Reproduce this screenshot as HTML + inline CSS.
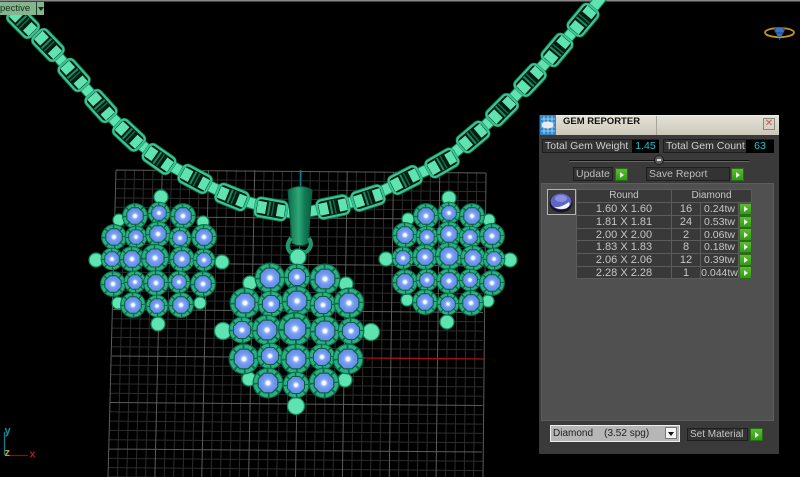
<!DOCTYPE html>
<html><head><meta charset="utf-8"><style>
html,body{margin:0;padding:0;background:#000}
#r{position:relative;width:800px;height:477px;overflow:hidden;background:#000;font:10.5px "Liberation Sans",sans-serif;color:#cfcfcf}
#r div{position:absolute;box-sizing:border-box;white-space:nowrap}
svg{position:absolute;left:0;top:0}
.box{background:#333;border:1px solid #1e1e1e;line-height:12px;padding-left:2px}
.val{background:#000;color:#19c8d2;text-align:center;line-height:13px}
.g{background:linear-gradient(#5cbb30,#329a16);border:1px solid #2a6a18}
.g:after{content:"";position:absolute;left:4px;top:2.5px;border-left:4px solid #e8f5e0;border-top:3px solid transparent;border-bottom:3px solid transparent}
.c{background:#393939;border:1px solid #5c5c5c;text-align:center;line-height:12px;color:#c6c6c6}
.n{font-size:11px}
</style></head><body><div id="r">
<svg width="800" height="477" viewBox="0 0 800 477">
<defs>
<radialGradient id="rg"><stop offset="0" stop-color="#fff"/><stop offset=".16" stop-color="#fbfdff"/><stop offset=".38" stop-color="#86a8f4"/><stop offset=".6" stop-color="#7098ee"/><stop offset="1" stop-color="#668ce6"/></radialGradient>
<linearGradient id="bail" x1="0" x2="1" y1="0" y2="0"><stop offset="0" stop-color="#0b6a48"/><stop offset=".45" stop-color="#2fa878"/><stop offset=".7" stop-color="#0f7a55"/><stop offset="1" stop-color="#0a5f40"/></linearGradient>
<g id="G"><circle r="15.800" fill="#0a6f4a"/><circle r="12.600" fill="none" stroke="#2bb082" stroke-width="3.800" stroke-dasharray="8 1.900"/><polygon points="-4.200,-10 4.200,-10 10,-4.200 10,4.200 4.200,10 -4.200,10 -10,4.200 -10,-4.200" fill="url(#rg)" stroke="#0b5f44" stroke-width="1.200"/></g>
<g id="L"><rect x="-17" y="-11" width="34" height="22" rx="6.500" fill="#0a7a50"/><rect x="-15.500" y="-9" width="31" height="18" rx="4.500" fill="#021c12" stroke="#3cc494" stroke-width="2.200"/><rect x="-14" y="-6" width="9" height="12" fill="#5fe3b0"/><rect x="6" y="-6" width="8" height="12" fill="#5fe3b0"/><rect x="-3" y="-7" width="2" height="14" fill="#1c8a62"/><rect x="1" y="-7" width="1.500" height="14" fill="#0f6a4a"/></g>
</defs>
<rect width="800" height="1.500" fill="#888"/>
<path stroke="#2d2d2d" stroke-width="1" fill="none" d="M125.25 170L117.4 477M134.5 170L126.75 477M143.75 170L136.1 477M153 170L145.5 477M171.5 170L164.25 477M180.75 170L173.6 477M190 170L183 477M199.25 170L192.4 477M217.75 170L211.1 477M227 170L220.5 477M236.25 170L229.9 477M245.5 170L239.25 477M264 171L258 477M273.25 171L267.4 477M282.5 171L276.75 477M291.75 171L286.1 477M310.25 171L304.9 477M319.5 171L314.25 477M328.75 171L323.6 477M338 171L333 477M356.5 171L351.75 477M365.75 172L361.1 477M375 172L370.5 477M384.25 172L379.9 477M402.75 172L398.6 477M412 172L408 477M421.25 172L417.4 477M430.5 172L426.75 477M449 172L445.5 477M458.25 172L454.9 477M467.5 172L464.25 477M476.75 172L473.6 477
M116 179.3l370 3M115.5 188.6l370 3M115.3 197.9l370 3M115 207.2l370 3M115 225.8l370 3M114.5 235.1l370 3M114.3 244.4l370 3M114 253.7l370 3M113.8 272.3l370 3M113.5 281.6l370 3M113.2 290.9l370 3M113 300.2l370 3M112.5 318.8l371 3M112.3 328.1l371 3M112 337.4l371 3M111.8 346.7l371 3M111.2 365.3l372 3M111 374.6l372 3M110.8 383.9l372 3M110.5 393.2l372 3M110 411.8l373 3M109.8 421.1l373 3M109.5 430.4l373 3M109.3 439.7l373 3M108.8 458.3l374 3M108.5 467.6l374 3M108.3 476.9l374 3"/>
<path stroke="#5c5c5c" stroke-width="1" fill="none" d="M116 170L108 477M162.25 170L154.9 477M208.5 170L201.75 477M254.75 170L248.6 477M301 171L295.5 477M347.25 171L342.4 477M393.5 172L389.25 477M439.75 172L436.1 477M486 173L483 477
M116 170l370 3M115 216.5l370 3M114 263l370 3M113 309.5l370 3M112 356l371 3M110.5 402.5l372 3M109 449l373 3"/>
<path d="M365 358L484 359" stroke="#a80f0f" stroke-width="1.200"/>
<path d="M300.500 170V190" stroke="#0c7f92" stroke-width="1.500"/>
<g fill="none" stroke-linejoin="round">
<path d="M8 6L23 22L48 45L74 75L101 106L129 135L159 159L195 179L232 197L271 209L292 213" stroke="#0b7a52" stroke-width="12"/>
<path d="M8 6L23 22L48 45L74 75L101 106L129 135L159 159L195 179L232 197L271 209L292 213" stroke="#5fe3b0" stroke-width="10"/>
<path d="M306 212L333 207L368 198L405 180L442 163L473 137L502 110L530 80L557 50L583 20L604 -6" stroke="#0b7a52" stroke-width="12"/>
<path d="M306 212L333 207L368 198L405 180L442 163L473 137L502 110L530 80L557 50L583 20L604 -6" stroke="#5fe3b0" stroke-width="10"/>
</g>
<use href="#L" transform="translate(23 22) rotate(45)"/>
<use href="#L" transform="translate(48 45) rotate(46)"/>
<use href="#L" transform="translate(74 75) rotate(48)"/>
<use href="#L" transform="translate(101 106) rotate(48)"/>
<use href="#L" transform="translate(129 135) rotate(43)"/>
<use href="#L" transform="translate(159 159) rotate(35)"/>
<use href="#L" transform="translate(195 179) rotate(28)"/>
<use href="#L" transform="translate(232 197) rotate(22)"/>
<use href="#L" transform="translate(271 209) rotate(10)"/>
<use href="#L" transform="translate(333 207) rotate(-12)"/>
<use href="#L" transform="translate(368 198) rotate(-18)"/>
<use href="#L" transform="translate(405 180) rotate(-27)"/>
<use href="#L" transform="translate(442 163) rotate(-30)"/>
<use href="#L" transform="translate(473 137) rotate(-40)"/>
<use href="#L" transform="translate(502 110) rotate(-45)"/>
<use href="#L" transform="translate(530 80) rotate(-47)"/>
<use href="#L" transform="translate(557 50) rotate(-50)"/>
<use href="#L" transform="translate(583 20) rotate(-50)"/>
<!-- bail -->
<path d="M288 190Q300 183 312 190L308 243Q300 248 292 243Z" fill="url(#bail)" stroke="#0a5f40"/>
<path d="M291 238Q285 246 290 252L306 252Q314 246 309 238" fill="none" stroke="#1f9a70" stroke-width="4"/>
<!-- balls -->
<g fill="#5fe3b0" stroke="#0e8a5e" stroke-width="1.200">
<circle cx="298" cy="257" r="8"/><circle cx="223" cy="331" r="8.500"/><circle cx="371" cy="332" r="8.500"/><circle cx="296" cy="406" r="8.500"/><circle cx="250" cy="283" r="7"/><circle cx="346" cy="284" r="7"/><circle cx="249" cy="379" r="7"/><circle cx="345" cy="380" r="7"/>
<circle cx="161" cy="197" r="7"/><circle cx="96" cy="260" r="7"/><circle cx="222" cy="262" r="7"/><circle cx="158" cy="324" r="7"/><circle cx="119" cy="220" r="6"/><circle cx="203" cy="222" r="6"/><circle cx="118" cy="303" r="6"/><circle cx="200" cy="303" r="6"/>
<circle cx="449" cy="198" r="7"/><circle cx="386" cy="259" r="7"/><circle cx="510" cy="260" r="7"/><circle cx="447" cy="322" r="7"/><circle cx="408" cy="219" r="6"/><circle cx="489" cy="220" r="6"/><circle cx="407" cy="300" r="6"/><circle cx="488" cy="301" r="6"/>
</g>
<!-- centre cluster -->
<use href="#G" transform="translate(270 278) scale(.98)"/><use href="#G" transform="translate(297 277) scale(.85)"/><use href="#G" transform="translate(325 279) scale(.98)"/>
<use href="#G" transform="translate(245 303) scale(.98)"/><use href="#G" transform="translate(271 304) scale(.85)"/><use href="#G" transform="translate(297 301) scale(.98)"/><use href="#G" transform="translate(323 305) scale(.85)"/><use href="#G" transform="translate(349 303) scale(.98)"/>
<use href="#G" transform="translate(242 330) scale(.85)"/><use href="#G" transform="translate(267 330) scale(.98)"/><use href="#G" transform="translate(295 329) scale(1.08)"/><use href="#G" transform="translate(325 331) scale(.98)"/><use href="#G" transform="translate(351 331) scale(.85)"/>
<use href="#G" transform="translate(244 359) scale(.98)"/><use href="#G" transform="translate(270 356) scale(.85)"/><use href="#G" transform="translate(296 359) scale(.98)"/><use href="#G" transform="translate(322 357) scale(.85)"/><use href="#G" transform="translate(348 359) scale(.98)"/>
<use href="#G" transform="translate(268 383) scale(.98)"/><use href="#G" transform="translate(296 385) scale(.85)"/><use href="#G" transform="translate(324 383) scale(.98)"/>
<!-- left cluster -->
<use href="#G" transform="translate(135 216) scale(.82)"/><use href="#G" transform="translate(159 213) scale(.72)"/><use href="#G" transform="translate(183 216) scale(.82)"/>
<use href="#G" transform="translate(114 237) scale(.82)"/><use href="#G" transform="translate(136 237) scale(.72)"/><use href="#G" transform="translate(158 234) scale(.82)"/><use href="#G" transform="translate(180 238) scale(.72)"/><use href="#G" transform="translate(204 237) scale(.82)"/>
<use href="#G" transform="translate(112 259) scale(.72)"/><use href="#G" transform="translate(132 259) scale(.82)"/><use href="#G" transform="translate(155 258) scale(.9)"/><use href="#G" transform="translate(182 259) scale(.82)"/><use href="#G" transform="translate(204 260) scale(.72)"/>
<use href="#G" transform="translate(113 284) scale(.82)"/><use href="#G" transform="translate(135 282) scale(.72)"/><use href="#G" transform="translate(156 283) scale(.82)"/><use href="#G" transform="translate(179 282) scale(.72)"/><use href="#G" transform="translate(203 284) scale(.82)"/>
<use href="#G" transform="translate(133 305) scale(.82)"/><use href="#G" transform="translate(157 306) scale(.72)"/><use href="#G" transform="translate(181 305) scale(.82)"/>
<!-- right cluster -->
<use href="#G" transform="translate(426 216) scale(.82)"/><use href="#G" transform="translate(449 213) scale(.72)"/><use href="#G" transform="translate(472 216) scale(.82)"/>
<use href="#G" transform="translate(405 235) scale(.82)"/><use href="#G" transform="translate(427 237) scale(.72)"/><use href="#G" transform="translate(449 234) scale(.82)"/><use href="#G" transform="translate(470 237) scale(.72)"/><use href="#G" transform="translate(492 236) scale(.82)"/>
<use href="#G" transform="translate(403 258) scale(.72)"/><use href="#G" transform="translate(425 257) scale(.82)"/><use href="#G" transform="translate(449 256) scale(.9)"/><use href="#G" transform="translate(473 258) scale(.82)"/><use href="#G" transform="translate(494 259) scale(.72)"/>
<use href="#G" transform="translate(405 282) scale(.82)"/><use href="#G" transform="translate(427 280) scale(.72)"/><use href="#G" transform="translate(449 281) scale(.82)"/><use href="#G" transform="translate(470 280) scale(.72)"/><use href="#G" transform="translate(492 283) scale(.82)"/>
<use href="#G" transform="translate(425 302) scale(.82)"/><use href="#G" transform="translate(448 304) scale(.72)"/><use href="#G" transform="translate(471 303) scale(.82)"/>
<!-- axes -->
<path d="M4.500 455V432" stroke="#0b7f8e" stroke-width="1.300"/><path d="M5 455.500H28" stroke="#8a1010" stroke-width="1.300"/>
<text x="4.500" y="434" font-size="11" font-weight="bold" font-family="Liberation Sans" fill="#0f93a3">y</text>
<text x="4.500" y="456" font-size="11" font-weight="bold" font-family="Liberation Sans" fill="#d09a20">z</text>
<text x="29.500" y="457.500" font-size="11" font-weight="bold" font-family="Liberation Sans" fill="#b01818">x</text>
<!-- ring icon -->
<ellipse cx="779.500" cy="32.500" rx="14.500" ry="4.500" fill="none" stroke="#c8921a" stroke-width="1.800"/>
<path d="M775 27H784L785 30L779.500 40L774 30Z" fill="#2658a8"/><path d="M776 29H783M775.500 31H783.500M777.500 35H781.500" stroke="#6a94dd" stroke-width=".8"/>
<path d="M766 35Q779 40 793 35" fill="none" stroke="#c8921a" stroke-width="1.300"/>
</svg>

<div style="left:0;top:2px;width:44px;height:13px;background:#82b68c;color:#1c2a20;font-size:9.500px;line-height:13px">pective</div>
<div style="left:36px;top:2px;width:8px;height:13px;background:#82b68c;border-left:1px solid #2a3a2e"></div>
<div style="left:38px;top:7px;width:0;height:0;border-left:3px solid transparent;border-right:3px solid transparent;border-top:4px solid #1c2a20"></div>

<div style="left:539px;top:115px;width:240px;height:339px;background:#3a3a3a"></div>
<div style="left:556px;top:115px;width:223px;height:20px;background:linear-gradient(#e4e1d6,#cbc8bb);border-top:1px solid #efece2;color:#111;font-weight:bold;font-size:9.500px;line-height:10px;padding:1px 0 0 7px">GEM REPORTER</div>
<div style="left:656px;top:116px;width:1px;height:19px;background:#a8a59a"></div>
<div style="left:540px;top:115px;width:16px;height:20px;background:#2f86c8"></div>
<svg style="left:540px;top:115px" width="16" height="20"><path d="M1 4H15M1 8H15M1 12H15M1 16H15M4 1V19M8 1V19M12 1V19" stroke="#bfe0f5" stroke-width=".8"/><ellipse cx="7.500" cy="10" rx="6" ry="3.500" fill="#e8eef0"/></svg>
<div style="left:763px;top:118px;width:12px;height:12px;background:#d9d0c6;border:1px solid #8a8a80;color:#c06050;font-size:10px;line-height:9px;text-align:center">✕</div>

<div class="box" style="left:542px;top:139px;width:117px;height:14px">Total Gem Weight</div>
<div class="val" style="left:632px;top:140px;width:27px;height:13px">1.45</div>
<div class="box" style="left:663px;top:139px;width:111px;height:14px">Total Gem Count</div>
<div class="val" style="left:746px;top:140px;width:28px;height:13px">63</div>

<div style="left:569px;top:160px;width:180px;height:1px;background:#111;box-shadow:0 1px 0 #666"></div>
<div style="left:654px;top:155px;width:10px;height:10px;border-radius:50%;background:#5a5a5a;border:1px solid #1c1c1c"></div>
<div style="left:657px;top:159px;width:4px;height:2px;background:#ddd"></div>

<div class="box" style="left:573px;top:167px;width:40px;height:14px;color:#bdbdbd">Update</div>
<div class="g" style="left:615px;top:168px;width:13px;height:13px"></div>
<div class="box" style="left:646px;top:167px;width:84px;height:14px;color:#bdbdbd">Save Report</div>
<div class="g" style="left:731px;top:168px;width:13px;height:13px"></div>

<div style="left:541px;top:183px;width:233px;height:238px;background:#505050;border:1px solid #5e5e5e"></div>
<div style="left:547px;top:189px;width:29px;height:26px;background:#3b3b3b;border:1px solid #b5b5b5"></div>
<svg style="left:547px;top:189px" width="29" height="26"><ellipse cx="14" cy="14" rx="11.500" ry="9.500" fill="#151520"/><ellipse cx="14" cy="12.500" rx="10.500" ry="8" fill="#5f66c8"/><ellipse cx="14" cy="9.500" rx="6" ry="3.500" fill="#8b90dc"/><path d="M7 18Q14 19 22 13Q24 17 19 19.500Q12 21 7 18Z" fill="#f5f5fa"/></svg>

<div class="c" style="left:576px;top:189px;width:96px;height:13.500px;font-size:10px">Round</div>
<div class="c" style="left:671px;top:189px;width:81px;height:13.500px;font-size:10px">Diamond</div>

<div class="c n" style="left:576px;top:202px;width:96px;height:13.500px">1.60 X 1.60</div><div class="c n" style="left:671px;top:202px;width:30px;height:13.500px">16</div><div class="c" style="left:700px;top:202px;width:39px;height:13.500px">0.24tw</div><div class="g" style="left:739px;top:202.500px;width:13px;height:12.500px"></div>
<div class="c n" style="left:576px;top:215px;width:96px;height:13.500px">1.81 X 1.81</div><div class="c n" style="left:671px;top:215px;width:30px;height:13.500px">24</div><div class="c" style="left:700px;top:215px;width:39px;height:13.500px">0.53tw</div><div class="g" style="left:739px;top:215.500px;width:13px;height:12.500px"></div>
<div class="c n" style="left:576px;top:227.500px;width:96px;height:13.500px">2.00 X 2.00</div><div class="c n" style="left:671px;top:227.500px;width:30px;height:13.500px">2</div><div class="c" style="left:700px;top:227.500px;width:39px;height:13.500px">0.06tw</div><div class="g" style="left:739px;top:228px;width:13px;height:12.500px"></div>
<div class="c n" style="left:576px;top:240px;width:96px;height:13.500px">1.83 X 1.83</div><div class="c n" style="left:671px;top:240px;width:30px;height:13.500px">8</div><div class="c" style="left:700px;top:240px;width:39px;height:13.500px">0.18tw</div><div class="g" style="left:739px;top:240.500px;width:13px;height:12.500px"></div>
<div class="c n" style="left:576px;top:253px;width:96px;height:13.500px">2.06 X 2.06</div><div class="c n" style="left:671px;top:253px;width:30px;height:13.500px">12</div><div class="c" style="left:700px;top:253px;width:39px;height:13.500px">0.39tw</div><div class="g" style="left:739px;top:253.500px;width:13px;height:12.500px"></div>
<div class="c n" style="left:576px;top:266px;width:96px;height:13px">2.28 X 2.28</div><div class="c n" style="left:671px;top:266px;width:30px;height:13px">1</div><div class="c" style="left:700px;top:266px;width:39px;height:13px">0.044tw</div><div class="g" style="left:739px;top:266px;width:13px;height:12.500px"></div>

<div style="left:550px;top:425px;width:130px;height:17px;background:#b6b6b6;border:1.500px solid #eee;color:#222;font-size:10px;line-height:15px;padding-left:2px">Diamond&nbsp;&nbsp;&nbsp;&nbsp;(3.52 spg)</div>
<div style="left:665px;top:427px;width:12px;height:12px;background:#f4f4f4;border:1px solid #777"></div>
<div style="left:668px;top:432px;width:0;height:0;border-left:3.500px solid transparent;border-right:3.500px solid transparent;border-top:4px solid #111"></div>
<div class="box" style="left:687px;top:428px;width:61px;height:13px;color:#c6c6c6;line-height:12px;font-size:10px">Set Material</div>
<div class="g" style="left:750px;top:428px;width:13px;height:13px"></div>
</div></body></html>
